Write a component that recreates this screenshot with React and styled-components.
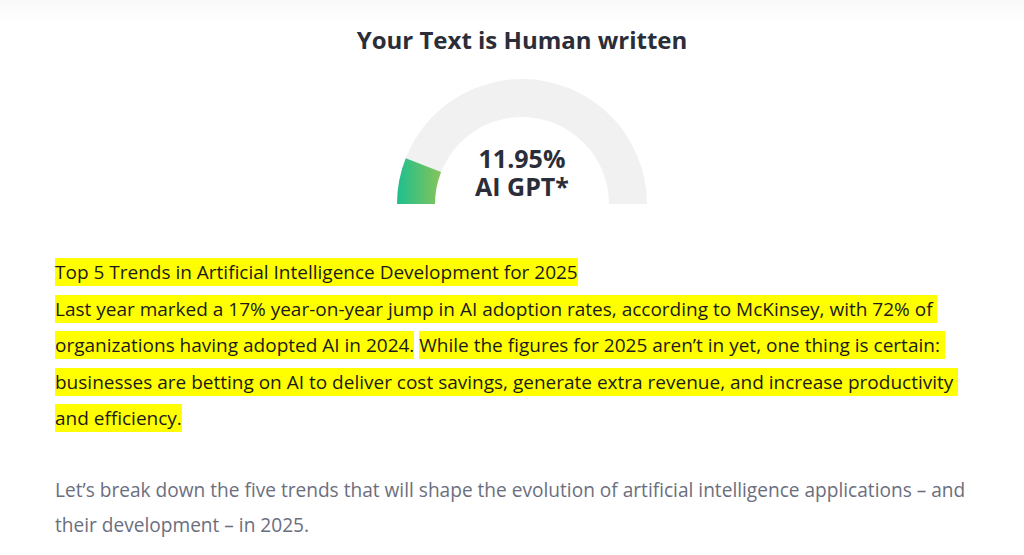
import React from 'react';
import styled, { createGlobalStyle } from 'styled-components';

const GlobalStyle = createGlobalStyle`
  html, body {
    margin: 0;
    padding: 0;
    background: #ffffff;
  }
  body {
    font-family: "Open Sans", "Noto Sans", sans-serif;
  }
`;

const Page = styled.div`
  width: 1024px;
  height: 555px;
  overflow: hidden;
  box-sizing: border-box;
  padding: 0 35px 0 55px;
  background: linear-gradient(#f9f9f9, #ffffff 24px);
`;

const ResultBlock = styled.section`
  display: flex;
  flex-direction: column;
  align-items: center;
  padding-top: 23px;
`;

const Title = styled.h2`
  margin: 0;
  font-size: 24px;
  line-height: 34px;
  font-weight: 700;
  color: #2b2d38;
`;

const Gauge = styled.div`
  position: relative;
  width: 250px;
  height: 125px;
  margin-top: 22px;
`;

const GaugeLabel = styled.div`
  position: absolute;
  left: 0;
  right: 0;
  bottom: 4px;
  text-align: center;
  font-size: 25px;
  line-height: 28px;
  font-weight: 700;
  color: #2b2d38;
`;

const Article = styled.div`
  width: 920px;
  margin-top: 50px;
`;

const Para = styled.p`
  margin: 0;
  font-size: ${(p) => p.$size || '19px'};
  line-height: ${(p) => p.$lh || '36.5px'};
  color: ${(p) => p.$color || '#1b1b1b'};
  margin-bottom: ${(p) => p.$gap || '0'};
`;

const Mark = styled.span`
  background: #ffff00;
  padding: 1px 0;
  white-space: break-spaces;
`;

function ScoreGauge({ value }) {
  const cx = 125;
  const rIn = 87;
  const rOut = 125;
  const a = Math.PI * (1 - value / 100);
  const ox = cx + rOut * Math.cos(a);
  const oy = 125 - rOut * Math.sin(a);
  const ix = cx + rIn * Math.cos(a);
  const iy = 125 - rIn * Math.sin(a);
  return (
    <Gauge>
      <svg width="250" height="125" viewBox="0 0 250 125">
        <defs>
          <linearGradient id="gaugeFill" x1="0" x2="1" y1="0" y2="0">
            <stop offset="0" stopColor="#1ebf8e" />
            <stop offset="1" stopColor="#85c459" />
          </linearGradient>
        </defs>
        <path
          d={`M0 125 A125 125 0 0 1 250 125 L${cx + rIn} 125 A${rIn} ${rIn} 0 0 0 ${cx - rIn} 125 Z`}
          fill="#f1f1f1"
        />
        <path
          d={`M0 125 A125 125 0 0 1 ${ox} ${oy} L${ix} ${iy} A${rIn} ${rIn} 0 0 0 ${cx - rIn} 125 Z`}
          fill="url(#gaugeFill)"
        />
      </svg>
      <GaugeLabel>
        <div>{value}%</div>
        <div>AI GPT*</div>
      </GaugeLabel>
    </Gauge>
  );
}

export default function App() {
  return (
    <>
      <GlobalStyle />
      <Page>
        <ResultBlock>
          <Title>Your Text is Human written</Title>
          <ScoreGauge value={11.95} />
        </ResultBlock>
        <Article>
          <Para $gap="36px">
            <Mark>Top 5 Trends in Artificial Intelligence Development for 2025</Mark>
            <br />
            <Mark>
              Last year marked a 17% year-on-year jump in AI adoption rates, according to McKinsey, with 72% of organizations having adopted AI in 2024.
            </Mark>{' '}
            <Mark>
              While the figures for 2025 aren’t in yet, one thing is certain: businesses are betting on AI to deliver cost savings, generate extra revenue, and increase productivity and efficiency.
            </Mark>
          </Para>
          <Para $color="#6b6e7e" $size="19.1px" $lh="35px">
            Let’s break down the five trends that will shape the evolution of artificial intelligence applications – and their development – in 2025.
          </Para>
        </Article>
      </Page>
    </>
  );
}
